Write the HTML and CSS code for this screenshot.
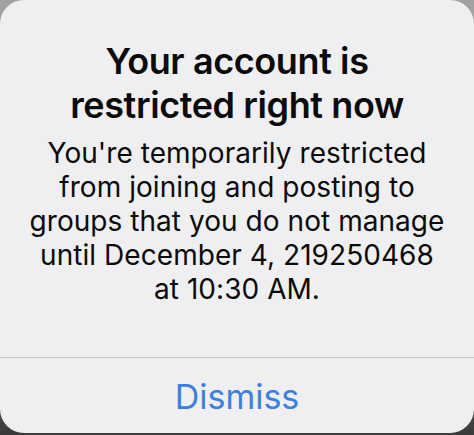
FILE: index.html
```html
<!DOCTYPE html>
<html lang="en">
<head>
    <meta charset="UTF-8">
    <meta name="viewport" content="width=device-width, initial-scale=1.0">
    <title>Account restricted</title>
    <link rel="stylesheet" href="styles.css">
</head>
<body>
    <div class="alert" role="alertdialog">
        <div class="alert-body">
            <h2 class="alert-title">Your account is<br>restricted right now</h2>
            <p class="alert-message">You're temporarily restricted<br>from joining and posting to<br>groups that you do not manage<br>until December 4, 219250468<br>at 10:30 AM.</p>
        </div>
        <div class="alert-actions">
            <button type="button" class="dismiss-button">Dismiss</button>
        </div>
    </div>
</body>
</html>
```

FILE: styles.css
```css
:root {
    --card-color: #efeff1;
    --text-color: #0b0b0b;
    --link-color: #3b7fe0;
    --divider-color: #c6c6c8;
}

* {
    box-sizing: border-box;
    margin: 0;
    padding: 0;
}

body {
    background: linear-gradient(180deg, #a2a2a4 0%, #8c8c8e 70%, #3a3a3c 100%);
    font-family: Inter, "Liberation Sans", Arial, sans-serif;
    color: var(--text-color);
    width: 474px;
    height: 435px;
    overflow: hidden;
}

.alert {
    width: 474px;
    height: 433px;
    background: var(--card-color);
    border-radius: 24px;
    display: flex;
    flex-direction: column;
}

.alert-body {
    padding: 39px 8px 0;
    height: 357px;
    text-align: center;
}

.alert-title {
    font-size: 36px;
    line-height: 44px;
    font-weight: 600;
    letter-spacing: -0.4px;
    margin-bottom: 9px;
}

.alert-message {
    font-size: 28px;
    line-height: 34px;
    font-weight: 400;
    letter-spacing: 0.05px;
}

.alert-actions {
    flex: 1;
    border-top: 1px solid var(--divider-color);
    display: flex;
    align-items: center;
    justify-content: center;
}

.dismiss-button {
    background: none;
    border: none;
    font-family: inherit;
    font-size: 34px;
    color: var(--link-color);
    cursor: pointer;
    padding-top: 2px;
}
```
